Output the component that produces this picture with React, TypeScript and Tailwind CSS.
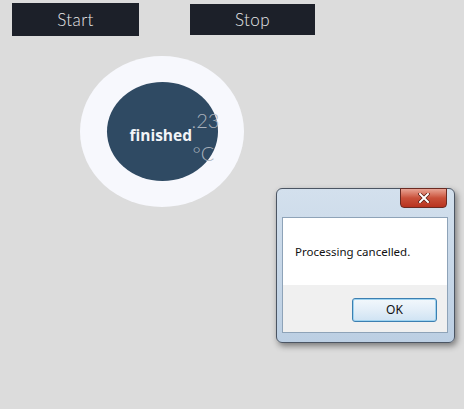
import React from "react";

const gothic = { fontFamily: "Lato, 'DejaVu Sans', sans-serif" };

export default function App() {
  return (
    <div className="relative w-[464px] h-[409px] overflow-hidden bg-[#dcdcdc]">
      {/* top controls */}
      <div className="flex items-start pt-[3px] pl-[12px]">
        <button
          className="w-[127px] h-[33px] bg-[#1c2029] text-[#e8e8ea] text-[17px] font-light tracking-wide"
          style={gothic}
        >
          Start
        </button>
        <button
          className="ml-[51px] mt-[1px] w-[125px] h-[31px] bg-[#1c2029] text-[#e8e8ea] text-[17px] font-light tracking-wide"
          style={gothic}
        >
          Stop
        </button>
      </div>

      {/* gauge */}
      <div className="mt-[20px] ml-[80px] w-[164px] h-[151px] rounded-[50%] bg-[#f7f8fd] flex items-center justify-center">
        <div className="relative w-[111px] h-[99px] rounded-[50%] bg-[#2f4a63]">
          <span
            className="absolute left-[23px] top-[46px] text-[15.5px] font-bold leading-none text-[#f2f4f7]"
            style={{ fontFamily: "'Open Sans', 'DejaVu Sans', sans-serif" }}
          >
            finished
          </span>
          <span
            className="absolute left-[85px] top-[28px] text-[20px] font-light leading-none text-[#a9b1bb]"
            style={gothic}
          >
            .23
          </span>
          <span
            className="absolute left-[86px] top-[61px] text-[20px] font-light leading-none text-[#a9b1bb]"
            style={gothic}
          >
            °C
          </span>
        </div>
      </div>

      {/* message box */}
      <div className="absolute left-[276px] top-[188px] w-[179px] h-[155px] rounded-[6px] border border-[#4b5563] bg-gradient-to-b from-[#d3e0ed] to-[#bccfe3] shadow-[2px_3px_6px_rgba(0,0,0,0.45)]">
        <button className="absolute right-[7px] top-[-1px] w-[47px] h-[20px] rounded-b-[4px] border border-[#6b2a22] bg-gradient-to-b from-[#e8a394] via-[#c9503a] to-[#b8331f] flex items-center justify-center">
          <svg width="12" height="10" viewBox="0 0 12 10">
            <path d="M2 1 L10 9 M10 1 L2 9" stroke="#5a1a12" strokeWidth="3.4" strokeLinecap="square" />
            <path d="M2 1 L10 9 M10 1 L2 9" stroke="#ffffff" strokeWidth="2" strokeLinecap="square" />
          </svg>
        </button>
        <div className="absolute left-[5px] right-[6px] top-[28px] bottom-[9px] border border-[#8ea3b8] flex flex-col">
          <div className="h-[67px] bg-white flex items-center pl-[12px]">
            <span
              className="text-[11.5px] text-[#111]"
              style={{ fontFamily: "'Noto Sans', 'DejaVu Sans', sans-serif" }}
            >
              Processing cancelled.
            </span>
          </div>
          <div className="flex-1 bg-[#f0f0f0] flex justify-end items-start pt-[13px] pr-[10px]">
            <button
              className="w-[85px] h-[24px] rounded-[3px] border border-[#3c7fb1] bg-gradient-to-b from-[#f2f8fc] via-[#e3eef8] to-[#cfe3f3] text-[12px] text-[#111] shadow-[inset_0_0_0_1px_#9ed3f0]"
              style={{ fontFamily: "'Noto Sans', 'DejaVu Sans', sans-serif" }}
            >
              OK
            </button>
          </div>
        </div>
      </div>
    </div>
  );
}
